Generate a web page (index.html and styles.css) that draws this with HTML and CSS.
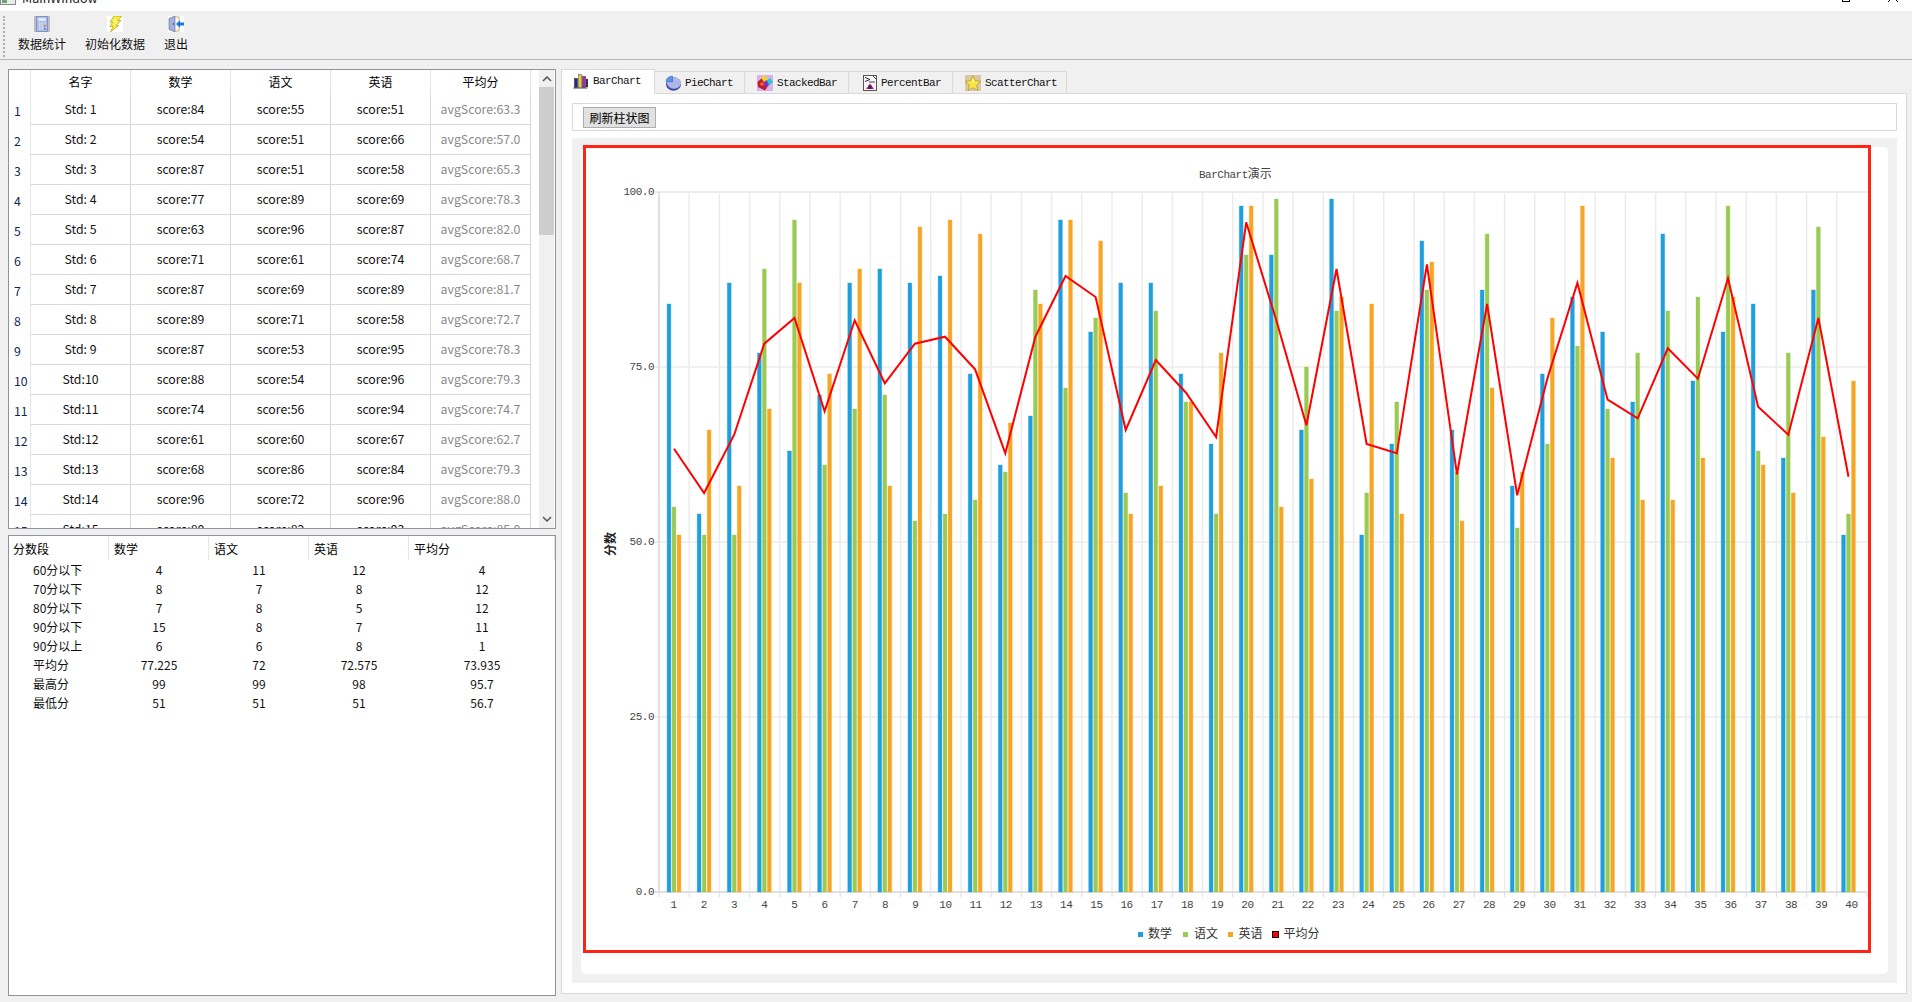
FILE: index.html
```html
<!DOCTYPE html>
<html lang="zh-CN">
<head>
<meta charset="utf-8">
<title>MainWindow</title>
<link rel="stylesheet" href="styles.css">
</head>
<body>
<div class="window">
  <header class="titlebar">
    <span class="title-left">
      <svg class="app-icon" width="16" height="16" viewBox="0 0 16 16"><rect x="0.5" y="0.5" width="15" height="14" fill="#e8efe8" stroke="#8a8a8a"/><rect x="2" y="10" width="5" height="3" fill="#6fa36f"/></svg>
      <span class="title-text">MainWindow</span>
    </span>
    <span class="win-controls">
      <svg width="8" height="8" viewBox="0 0 8 8"><rect x="0.5" y="0.5" width="7" height="7" fill="none" stroke="#000"/></svg>
      <svg width="10" height="10" viewBox="0 0 10 10"><path d="M0 0L10 10M10 0L0 10" stroke="#000" fill="none"/></svg>
    </span>
  </header>

  <nav class="toolbar">
    <span class="handle"></span>
    <div class="tool tool-first">
      <svg width="16" height="16" viewBox="0 0 16 16"><rect width="16" height="16" fill="#b9bfc9"/><rect x="2.500" y="0.500" width="11" height="15" fill="#a9bde8" stroke="#8494bd"/><rect x="4.500" y="2" width="7" height="3" fill="#e3ebfa"/><path d="M5 7h1.500M7.500 7h1.500M10 7h1.500M5 9h1.500M7.500 9h1.500M5 11h1.500M7.500 11h1.500M5 13h1.500M7.500 13h1.500" stroke="#eef2fb"/><rect x="10" y="9" width="2" height="2" fill="#e0855f"/><rect x="10" y="12" width="2" height="2" fill="#7d8fc4"/></svg>
      <span>数据统计</span>
    </div>
    <div class="tool tool-second">
      <svg width="16" height="16" viewBox="0 0 16 16"><rect width="16" height="16" fill="#fff"/><path d="M7 0H15L11 4.500H14L9 9.500H11.500L3.500 16L6 10.500H3L5.500 6H3Z" fill="#f7ea38" stroke="#b5a11c" stroke-width="0.700"/><path d="M8.500 2L7 5.500H9.500L7 10" fill="none" stroke="#fffbd0"/></svg>
      <span>初始化数据</span>
    </div>
    <div class="tool tool-third">
      <svg width="16" height="16" viewBox="0 0 16 16"><rect width="16" height="16" fill="#fff"/><path d="M1 2.500L7 0V16L1 13.500Z" fill="#a3b1e3" stroke="#5a648f" stroke-width="0.600"/><path d="M7 1H11V4M7 15H11V12" fill="none" stroke="#c9a85a"/><circle cx="5.500" cy="8" r="0.800" fill="#2b3566"/><path d="M8 8L12 4V6.500H16V9.500H12V12Z" fill="#1e74e0"/></svg>
      <span>退出</span>
    </div>
  </nav>

  <main class="content">
    <section class="left-col">
      <div class="panel score-panel">
        <div class="score-scroll">
          <table class="score-table">
            <thead>
              <tr><th class="rowhead"></th><th>名字</th><th>数学</th><th>语文</th><th>英语</th><th>平均分</th></tr>
            </thead>
            <tbody>
              <tr><td class="rowhead">1</td><td>Std: 1</td><td>score:84</td><td>score:55</td><td>score:51</td><td class="avg">avgScore:63.3</td></tr>
              <tr><td class="rowhead">2</td><td>Std: 2</td><td>score:54</td><td>score:51</td><td>score:66</td><td class="avg">avgScore:57.0</td></tr>
              <tr><td class="rowhead">3</td><td>Std: 3</td><td>score:87</td><td>score:51</td><td>score:58</td><td class="avg">avgScore:65.3</td></tr>
              <tr><td class="rowhead">4</td><td>Std: 4</td><td>score:77</td><td>score:89</td><td>score:69</td><td class="avg">avgScore:78.3</td></tr>
              <tr><td class="rowhead">5</td><td>Std: 5</td><td>score:63</td><td>score:96</td><td>score:87</td><td class="avg">avgScore:82.0</td></tr>
              <tr><td class="rowhead">6</td><td>Std: 6</td><td>score:71</td><td>score:61</td><td>score:74</td><td class="avg">avgScore:68.7</td></tr>
              <tr><td class="rowhead">7</td><td>Std: 7</td><td>score:87</td><td>score:69</td><td>score:89</td><td class="avg">avgScore:81.7</td></tr>
              <tr><td class="rowhead">8</td><td>Std: 8</td><td>score:89</td><td>score:71</td><td>score:58</td><td class="avg">avgScore:72.7</td></tr>
              <tr><td class="rowhead">9</td><td>Std: 9</td><td>score:87</td><td>score:53</td><td>score:95</td><td class="avg">avgScore:78.3</td></tr>
              <tr><td class="rowhead">10</td><td>Std:10</td><td>score:88</td><td>score:54</td><td>score:96</td><td class="avg">avgScore:79.3</td></tr>
              <tr><td class="rowhead">11</td><td>Std:11</td><td>score:74</td><td>score:56</td><td>score:94</td><td class="avg">avgScore:74.7</td></tr>
              <tr><td class="rowhead">12</td><td>Std:12</td><td>score:61</td><td>score:60</td><td>score:67</td><td class="avg">avgScore:62.7</td></tr>
              <tr><td class="rowhead">13</td><td>Std:13</td><td>score:68</td><td>score:86</td><td>score:84</td><td class="avg">avgScore:79.3</td></tr>
              <tr><td class="rowhead">14</td><td>Std:14</td><td>score:96</td><td>score:72</td><td>score:96</td><td class="avg">avgScore:88.0</td></tr>
              <tr><td class="rowhead">15</td><td>Std:15</td><td>score:80</td><td>score:82</td><td>score:93</td><td class="avg">avgScore:85.0</td></tr>
            </tbody>
          </table>
        </div>
        <div class="scrollbar">
          <svg class="chev" width="10" height="6" viewBox="0 0 10 6"><path d="M1 5L5 1L9 5" fill="none" stroke="#555" stroke-width="1.500"/></svg>
          <div class="thumb"></div>
          <svg class="chev chev-down" width="10" height="6" viewBox="0 0 10 6"><path d="M1 1L5 5L9 1" fill="none" stroke="#555" stroke-width="1.500"/></svg>
        </div>
      </div>
      <div class="panel stats-panel">
        <table class="stats-table">
          <thead>
            <tr><th>分数段</th><th>数学</th><th>语文</th><th>英语</th><th>平均分</th></tr>
          </thead>
          <tbody>
            <tr><td>60分以下</td><td>4</td><td>11</td><td>12</td><td>4</td></tr>
            <tr><td>70分以下</td><td>8</td><td>7</td><td>8</td><td>12</td></tr>
            <tr><td>80分以下</td><td>7</td><td>8</td><td>5</td><td>12</td></tr>
            <tr><td>90分以下</td><td>15</td><td>8</td><td>7</td><td>11</td></tr>
            <tr><td>90分以上</td><td>6</td><td>6</td><td>8</td><td>1</td></tr>
            <tr><td>平均分</td><td>77.225</td><td>72</td><td>72.575</td><td>73.935</td></tr>
            <tr><td>最高分</td><td>99</td><td>99</td><td>98</td><td>95.7</td></tr>
            <tr><td>最低分</td><td>51</td><td>51</td><td>51</td><td>56.7</td></tr>
          </tbody>
        </table>
      </div>
    </section>

    <section class="right-col">
      <div class="tabs">
        <div class="tab tab-active tab-bar">
          <svg width="16" height="16" viewBox="0 0 16 16"><path d="M1 13H15L14 16H0Z" fill="#a4a4a4"/><rect x="1.500" y="5.500" width="3" height="9" fill="#26288f" stroke="#33333f" stroke-width="0.600"/><rect x="5.500" y="1.500" width="3" height="13" fill="#e3d02a" stroke="#6a6a50" stroke-width="0.600"/><rect x="9.500" y="3.500" width="3" height="11" fill="#b4269e" stroke="#3f3350" stroke-width="0.600"/><rect x="13" y="6" width="2" height="8" fill="#30306e"/></svg>
          <span>BarChart</span>
        </div>
        <div class="tab tab-pie">
          <svg width="16" height="16" viewBox="0 0 16 16"><ellipse cx="8.500" cy="9" rx="7.500" ry="6.800" fill="#3d4aa8"/><ellipse cx="9" cy="8" rx="7" ry="5.800" fill="#aeb6ea"/><path d="M7.500 7L1 6.500A7 5.500 0 0 1 7.500 1Z" fill="#5b95e6" stroke="#2f5fb0" stroke-width="0.500"/></svg>
          <span>PieChart</span>
        </div>
        <div class="tab tab-stacked">
          <svg width="16" height="16" viewBox="0 0 16 16"><rect width="16" height="16" fill="#d6b3e8"/><path d="M0.500 7L6 2L13 8L8 15.500L1 12Z" fill="#c21a2e"/><path d="M4 3L8 0L11 4L7 7Z" fill="#f2d32a"/><path d="M8 7L13 3L16 7L11 11Z" fill="#28c4d8"/><path d="M6 8L10 6L12 10L8 12Z" fill="#7a32c4"/><path d="M3 8L6 7L7 10L4 11Z" fill="#e86a2a"/></svg>
          <span>StackedBar</span>
        </div>
        <div class="tab tab-percent">
          <svg width="14" height="16" viewBox="0 0 14 16"><rect x="0.500" y="0.500" width="13" height="15" fill="#f6f6f6" stroke="#555"/><path d="M2 2.500L7 4.500L2 6.500" fill="none" stroke="#333"/><path d="M10 1L13 4M6 7H12" stroke="#444" fill="none"/><path d="M3 14L7 8.500L11 14Z" fill="#d02020"/><rect x="5.500" y="10.500" width="3" height="3.500" fill="#2020b0"/></svg>
          <span>PercentBar</span>
        </div>
        <div class="tab tab-scatter">
          <svg width="16" height="16" viewBox="0 0 16 16"><rect width="16" height="16" fill="#d8c8a8"/><path d="M8 0.500L10.300 5.700L15.800 6.300L11.700 10L12.900 15.500L8 12.700L3.100 15.500L4.300 10L0.200 6.300L5.700 5.700Z" fill="#fbe444" stroke="#a98c1c" stroke-width="0.600"/><path d="M8 3L6.800 7L9 8Z" fill="#fff8b0"/></svg>
          <span>ScatterChart</span>
        </div>
      </div>
      <div class="tab-pane">
        <div class="button-bar">
          <button class="refresh" type="button">刷新柱状图</button>
        </div>
        <div class="chart-box">
          <div class="chart-view">
            <svg id="chart" class="chart-svg" viewBox="581 147 1307 827" width="1307" height="827" xmlns="http://www.w3.org/2000/svg"></svg>
          </div>
        </div>
      </div>
    </section>
  </main>
</div>
<script src="chart.js"></script>
</body>
</html>
```

FILE: styles.css
```css
* { box-sizing: border-box; }
html, body { margin: 0; padding: 0; }
body {
  width: 1912px;
  height: 1002px;
  overflow: hidden;
  background: #f0f0f0;
  font-family: "Noto Sans CJK SC", "Microsoft YaHei", sans-serif;
  font-size: 12px;
  color: #000;
}
.window { display: flex; flex-direction: column; height: 1002px; }

.titlebar {
  height: 11px;
  background: #fff;
  display: flex;
  justify-content: space-between;
  overflow: hidden;
  flex: none;
}
.title-left { display: flex; align-items: center; gap: 6px; height: 16px; margin-top: -10px; }
.title-text { font-size: 12.500px; line-height: 16px; color: #222; }
.win-controls { display: flex; align-items: flex-end; gap: 38px; height: 2px; padding-right: 14px; }

.toolbar {
  height: 49px;
  flex: none;
  display: flex;
  align-items: flex-start;
  border-bottom: 1px solid #b4b4b4;
  padding-top: 5px;
}
.handle {
  width: 1px;
  height: 41px;
  margin: 0 0 0 3px;
  border-left: 2px dotted #b0b0b0;
}
.tool {
  display: flex;
  flex-direction: column;
  align-items: center;
  gap: 4px;
  line-height: 16px;
  color: #111;
}
.tool-first { margin-left: 13px; width: 48px; }
.tool-second { margin-left: 19px; width: 60px; }
.tool-third { margin-left: 19px; width: 24px; }

.content { flex: 1; display: flex; min-height: 0; padding: 9px 5px 6px 8px; gap: 5px; }

.left-col { width: 548px; flex: none; display: flex; flex-direction: column; gap: 6px; }
.panel { background: #fff; border: 1px solid #8f949b; overflow: hidden; }
.score-panel { height: 460px; flex: none; display: flex; }
.score-scroll { width: 531px; flex: none; overflow: hidden; }
.stats-panel { flex: 1; }

table { border-collapse: separate; border-spacing: 0; table-layout: fixed; }
.score-table { width: 522px; }
.score-table th {
  height: 25px;
  font-weight: 400;
  border-right: 1px solid #e5e5e5;
  padding: 0 0 1px;
  width: 100px;
  text-align: center;
  line-height: 24px;
}
.score-table th.rowhead { width: 22px; border-right: 1px solid #e5e5e5; }
.score-table td {
  height: 30px;
  padding: 0 0 1px;
  text-align: center;
  border-right: 1px solid #d9d9d9;
  border-bottom: 1px solid #d9d9d9;
  line-height: 16px;
  color: #111;
  font-size: 12.300px;
}
.score-table td.rowhead {
  text-align: left;
  padding: 1px 0 0 5px;
  border-bottom: 0;
  border-right: 1px solid #e5e5e5;
  color: #12264d;
}
.score-table td.avg { color: #8a8a8a; }

.scrollbar {
  width: 15px;
  flex: none;
  margin-left: -1px;
  background: #f0f0f0;
  display: flex;
  flex-direction: column;
  align-items: center;
}
.chev { flex: none; margin-top: 6px; }
.thumb { width: 15px; height: 148px; background: #cdcdcd; margin-top: 5px; }
.chev-down { margin-top: auto; margin-bottom: 6px; }

.stats-table { width: 546px; }
.stats-table th {
  height: 24px;
  font-weight: 400;
  text-align: left;
  padding: 0 0 0 5px;
  border-right: 1px solid #e5e5e5;
  width: 100px;
}
.stats-table th:first-child { padding-left: 4px; }
.stats-table th:last-child { width: 146px; }
.stats-table td {
  height: 19px;
  padding: 0;
  text-align: center;
  line-height: 19px;
  color: #111;
}
.stats-table td:first-child { text-align: left; padding-left: 24px; }

.right-col { flex: 1; min-width: 0; display: flex; flex-direction: column; margin-bottom: 2px; }
.tabs { display: flex; height: 25px; flex: none; align-items: flex-end; position: relative; z-index: 1; margin-bottom: -1px; }
.tab {
  height: 23px;
  display: flex;
  align-items: center;
  gap: 4px;
  background: #f0f0f0;
  border: 1px solid #d9d9d9;
  border-left: 0;
  font-family: "Liberation Mono", monospace;
  font-size: 11px;
  letter-spacing: -0.600px;
  color: #111;
}
.tab-active { height: 25px; background: #fff; border-left: 1px solid #d9d9d9; border-bottom: 1px solid #fff; padding-bottom: 1px; }
.tab-bar { width: 94px; padding-left: 11px; }
.tab-pie { width: 90px; padding-left: 10px; }
.tab-stacked { width: 104px; padding-left: 12px; }
.tab-percent { width: 104px; padding-left: 14px; }
.tab-scatter { width: 114px; padding-left: 12px; }

.tab-pane {
  flex: 1;
  min-height: 0;
  background: #fff;
  border: 1px solid #d9d9d9;
  padding: 9px 9px 10px 10px;
  display: flex;
  flex-direction: column;
  gap: 7px;
}
.button-bar {
  height: 28px;
  flex: none;
  border: 1px solid #d9d9d9;
  padding: 3px 10px;
  display: flex;
  align-items: flex-start;
}
.refresh {
  width: 73px;
  height: 21px;
  padding: 0;
  background: #e1e1e1;
  border: 1px solid #adadad;
  font-family: "Noto Sans CJK SC", sans-serif;
  font-size: 12px;
  line-height: 18px;
  color: #000;
}
.chart-box { flex: 1; min-height: 0; background: #f0f0f0; padding: 9px; }
.chart-view { width: 1307px; height: 827px; background: #fff; border-radius: 5px; }
.chart-svg { display: block; overflow: visible; }
.chart-svg text { font-family: "Liberation Mono", monospace; font-size: 11px; letter-spacing: -0.500px; fill: #444; }
.chart-svg text.cjk { font-family: "Noto Sans CJK SC", sans-serif; font-size: 12px; letter-spacing: 0; fill: #333; }
.chart-svg text.title .cjk-run { font-family: "Noto Sans CJK SC", sans-serif; font-size: 12px; letter-spacing: 0; }
.chart-svg text.ytitle { font-size: 12px; font-weight: 700; fill: #222; }
.grid { stroke: #ececec; stroke-width: 1.500; fill: none; }
.grid-top { stroke-width: 2; }
.axis { stroke: #e0e0e0; stroke-width: 2; fill: none; }
.tick { stroke: #dcdcdc; stroke-width: 1; fill: none; }
.avg-line { stroke: #ff0000; stroke-width: 2; fill: none; stroke-linejoin: miter; }
.annotation { stroke: #ff2416; stroke-width: 3; fill: none; }
.bar-a { fill: #209fdf; stroke: #209fdf; stroke-opacity: .35; stroke-width: 1; }
.bar-b { fill: #99ca53; stroke: #99ca53; stroke-opacity: .35; stroke-width: 1; }
.bar-c { fill: #f6a625; stroke: #f6a625; stroke-opacity: .35; stroke-width: 1; }
.key-a { fill: #209fdf; }
.key-b { fill: #99ca53; }
.key-c { fill: #f6a625; }
.key-d { fill: #ff0000; stroke: #000; stroke-width: 1; }
```

FILE: chart.js
```js
(function () {
  var NS = 'http://www.w3.org/2000/svg';
  var svg = document.getElementById('chart');
  var math = [84,54,87,77,63,71,87,89,87,88,74,61,68,96,80,87,87,74,64,98,91,66,99,51,64,93,66,86,58,74,85,80,70,94,73,80,84,62,86,51];
  var chin = [55,51,51,89,96,61,69,71,53,54,56,60,86,72,82,57,83,70,54,91,99,75,83,57,70,86,60,94,52,64,78,69,77,83,85,98,63,77,95,54];
  var engl = [51,66,58,69,87,74,89,58,95,96,94,67,84,96,93,54,58,70,77,98,55,59,85,84,54,90,53,72,60,82,98,62,56,56,62,85,61,57,65,73];
  var LEFT = 659, RIGHT = 1867, TOP = 192, BOTTOM = 892, N = 40;
  var STEP = (RIGHT - LEFT) / N, UNIT = (BOTTOM - TOP) / 100;
  var GROUP_START = 674, GROUP_STEP = 30.115;

  function el(name, attrs, text) {
    var e = document.createElementNS(NS, name);
    for (var k in attrs) e.setAttribute(k, attrs[k]);
    if (text !== undefined) e.textContent = text;
    svg.appendChild(e);
    return e;
  }
  function y(v) { return BOTTOM - v * UNIT; }

  var i, x;
  for (i = 1; i < N; i++) {
    x = LEFT + i * STEP;
    el('line', { x1: x, y1: TOP, x2: x, y2: BOTTOM, 'class': 'grid' });
  }
  [100, 75, 50, 25].forEach(function (v) {
    el('line', { x1: LEFT, y1: y(v), x2: RIGHT, y2: y(v), 'class': v === 100 ? 'grid grid-top' : 'grid' });
    el('line', { x1: LEFT - 4, y1: y(v), x2: LEFT, y2: y(v), 'class': 'tick' });
  });
  el('line', { x1: LEFT, y1: TOP, x2: LEFT, y2: BOTTOM, 'class': 'axis' });
  el('line', { x1: LEFT - 4, y1: BOTTOM, x2: RIGHT, y2: BOTTOM, 'class': 'axis' });

  [100, 75, 50, 25, 0].forEach(function (v) {
    el('text', { x: 654, y: y(v) + 3, 'text-anchor': 'end' }, v.toFixed(1));
  });

  for (i = 0; i <= N; i++) {
    x = LEFT + i * STEP;
    el('line', { x1: x, y1: BOTTOM, x2: x, y2: BOTTOM + 5, 'class': 'tick' });
  }
  var pts = [];
  for (i = 0; i < N; i++) {
    var c = GROUP_START + i * GROUP_STEP;
    el('rect', { x: c - 6.9, y: y(math[i]), width: 3.8, height: math[i] * UNIT, 'class': 'bar-a' });
    el('rect', { x: c - 1.9, y: y(chin[i]), width: 3.8, height: chin[i] * UNIT, 'class': 'bar-b' });
    el('rect', { x: c + 3.1, y: y(engl[i]), width: 3.8, height: engl[i] * UNIT, 'class': 'bar-c' });
    el('text', { x: LEFT + (i + 0.5) * STEP - 0.5, y: 908, 'text-anchor': 'middle' }, String(i + 1));
    pts.push(c.toFixed(1) + ',' + y((math[i] + chin[i] + engl[i]) / 3).toFixed(1));
  }
  el('polyline', { points: pts.join(' '), 'class': 'avg-line' });

  var title = el('text', { x: 1199, y: 178, 'class': 'title' }, 'BarChart');
  var run = document.createElementNS(NS, 'tspan');
  run.setAttribute('class', 'cjk-run');
  run.textContent = '演示';
  title.appendChild(run);

  el('text', { x: 0, y: 0, 'class': 'cjk ytitle', 'text-anchor': 'middle', transform: 'translate(615 544) rotate(-90)' }, '分数');

  el('rect', { x: 1138, y: 932, width: 5, height: 5, 'class': 'key-a' });
  el('text', { x: 1148, y: 938, 'class': 'cjk' }, '数学');
  el('rect', { x: 1183, y: 932, width: 5, height: 5, 'class': 'key-b' });
  el('text', { x: 1194, y: 938, 'class': 'cjk' }, '语文');
  el('rect', { x: 1228, y: 932, width: 5, height: 5, 'class': 'key-c' });
  el('text', { x: 1238.5, y: 938, 'class': 'cjk' }, '英语');
  el('rect', { x: 1272.5, y: 931.5, width: 6, height: 6, 'class': 'key-d' });
  el('text', { x: 1283.5, y: 938, 'class': 'cjk' }, '平均分');

  el('rect', { x: 584.5, y: 146.5, width: 1285, height: 805, 'class': 'annotation' });
})();
```
